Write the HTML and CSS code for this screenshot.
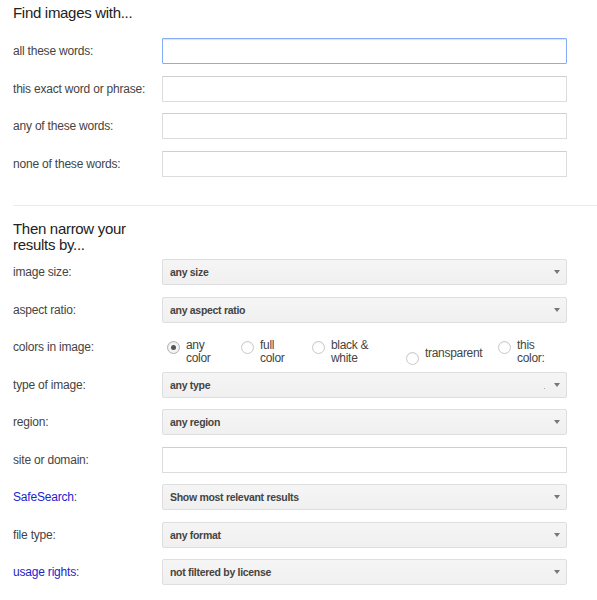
FILE: index.html
```html
<!DOCTYPE html>
<html lang="en">
<head>
<meta charset="utf-8">
<title>Advanced Image Search</title>
<link rel="stylesheet" href="styles.css">
</head>
<body>
<div class="page">
  <h2 class="heading heading-find">Find images with...</h2>
  <div class="rows">
    <div class="row"><span class="label">all these words:</span><input class="field text-input focused" type="text"></div>
    <div class="row"><span class="label">this exact word or phrase:</span><input class="field text-input" type="text"></div>
    <div class="row"><span class="label">any of these words:</span><input class="field text-input" type="text"></div>
    <div class="row"><span class="label">none of these words:</span><input class="field text-input" type="text"></div>
  </div>

  <div class="divider"></div>

  <h2 class="heading heading-narrow">Then narrow your results by...</h2>
  <div class="rows">
    <div class="row"><span class="label">image size:</span>
      <div class="field select"><span class="select-text">any size</span><span class="arrow"></span></div></div>
    <div class="row"><span class="label">aspect ratio:</span>
      <div class="field select"><span class="select-text">any aspect ratio</span><span class="arrow"></span></div></div>
    <div class="row"><span class="label">colors in image:</span>
      <div class="field radios">
        <label class="radio-item"><span class="radio checked"></span><span class="radio-text">any<br>color</span></label>
        <label class="radio-item"><span class="radio"></span><span class="radio-text">full<br>color</span></label>
        <label class="radio-item"><span class="radio"></span><span class="radio-text">black &amp;<br>white</span></label>
        <label class="radio-item low"><span class="radio"></span><span class="radio-text">transparent</span></label>
        <label class="radio-item"><span class="radio"></span><span class="radio-text">this<br>color:</span></label>
      </div></div>
    <div class="row"><span class="label">type of image:</span>
      <div class="field select"><span class="select-text">any type</span><span class="select-dot"></span><span class="arrow"></span></div></div>
    <div class="row"><span class="label">region:</span>
      <div class="field select"><span class="select-text">any region</span><span class="arrow"></span></div></div>
    <div class="row"><span class="label">site or domain:</span><input class="field text-input" type="text"></div>
    <div class="row"><span class="label"><a class="label-link" href="#">SafeSearch</a>:</span>
      <div class="field select"><span class="select-text">Show most relevant results</span><span class="arrow"></span></div></div>
    <div class="row"><span class="label">file type:</span>
      <div class="field select"><span class="select-text">any format</span><span class="arrow"></span></div></div>
    <div class="row"><span class="label"><a class="label-link" href="#">usage rights</a>:</span>
      <div class="field select"><span class="select-text">not filtered by license</span><span class="arrow"></span></div></div>
  </div>
</div>
</body>
</html>
```

FILE: styles.css
```css
html, body {
  margin: 0;
  background: #fff;
}

body {
  font-family: "Liberation Sans", Arial, sans-serif;
  color: #222;
}

.page {
  padding: 4px 0 0 13px;
}

.heading {
  margin: 0;
  font-size: 15px;
  font-weight: normal;
  letter-spacing: -0.3px;
  color: #222;
}

.heading-find {
  line-height: 18px;
  margin-bottom: 16px;
}

.heading-narrow {
  width: 149px;
  line-height: 16px;
  margin-bottom: 6px;
}

.rows {
  display: flex;
  flex-direction: column;
  gap: 11.5px;
}

.row {
  display: flex;
  align-items: center;
  height: 26px;
}

.label {
  width: 149px;
  flex: none;
  font-size: 12px;
  letter-spacing: -0.2px;
  color: #444;
}

.label-link {
  color: #2323cc;
  text-decoration: none;
}

.field {
  width: 405px;
  height: 26px;
  box-sizing: border-box;
  flex: none;
}

.text-input {
  margin: 0;
  padding: 0 8px;
  border: 1px solid #dcdcdc;
  border-top-color: #cfcfcf;
  border-radius: 1px;
  background: #fff;
  font-family: inherit;
  font-size: 13px;
  outline: none;
}

.text-input.focused {
  border-color: #86aef7;
  box-shadow: inset 0 1px 1px rgba(0, 0, 0, 0.12);
}

.divider {
  height: 1px;
  background: #ebebeb;
  margin: 28.5px 0 15px;
}

.select {
  display: flex;
  align-items: center;
  padding: 0 6px 0 7px;
  border: 1px solid #dedede;
  border-radius: 2px;
  background: linear-gradient(#f5f5f5, #f0f0f0);
  font-size: 10.5px;
  font-weight: bold;
  letter-spacing: -0.3px;
  color: #444;
}

.select-text {
  flex: 1;
  white-space: nowrap;
}

.select-dot {
  width: 1px;
  height: 1px;
  margin: 8px 9px 0 0;
  background: #aaa;
}

.arrow {
  width: 0;
  height: 0;
  border-left: 3px solid transparent;
  border-right: 3px solid transparent;
  border-top: 4px solid #777;
}

.radios {
  display: grid;
  grid-template-columns: 74px 71px 94px 92px auto;
  align-items: end;
  align-self: flex-start;
  height: auto;
  margin-top: 5px;
  padding-left: 5px;
}

.radio-item {
  display: flex;
  align-items: flex-start;
  gap: 6px;
  font-size: 12px;
  line-height: 13px;
  letter-spacing: -0.3px;
  color: #444;
}

.radio {
  position: relative;
  flex: none;
  width: 13px;
  height: 13px;
  box-sizing: border-box;
  margin-top: 2px;
  border: 1px solid #c8c8c8;
  border-radius: 50%;
  background: #fff;
  box-shadow: inset 0 1px 1px rgba(0, 0, 0, 0.05);
}

.radio.checked {
  border-color: #b0b0b0;
  background: #f4f4f4;
}

.radio.checked::after {
  content: "";
  position: absolute;
  left: 3px;
  top: 3px;
  width: 5px;
  height: 5px;
  border-radius: 50%;
  background: #555;
}

.radio-item.low .radio {
  margin-top: 5px;
}
```
